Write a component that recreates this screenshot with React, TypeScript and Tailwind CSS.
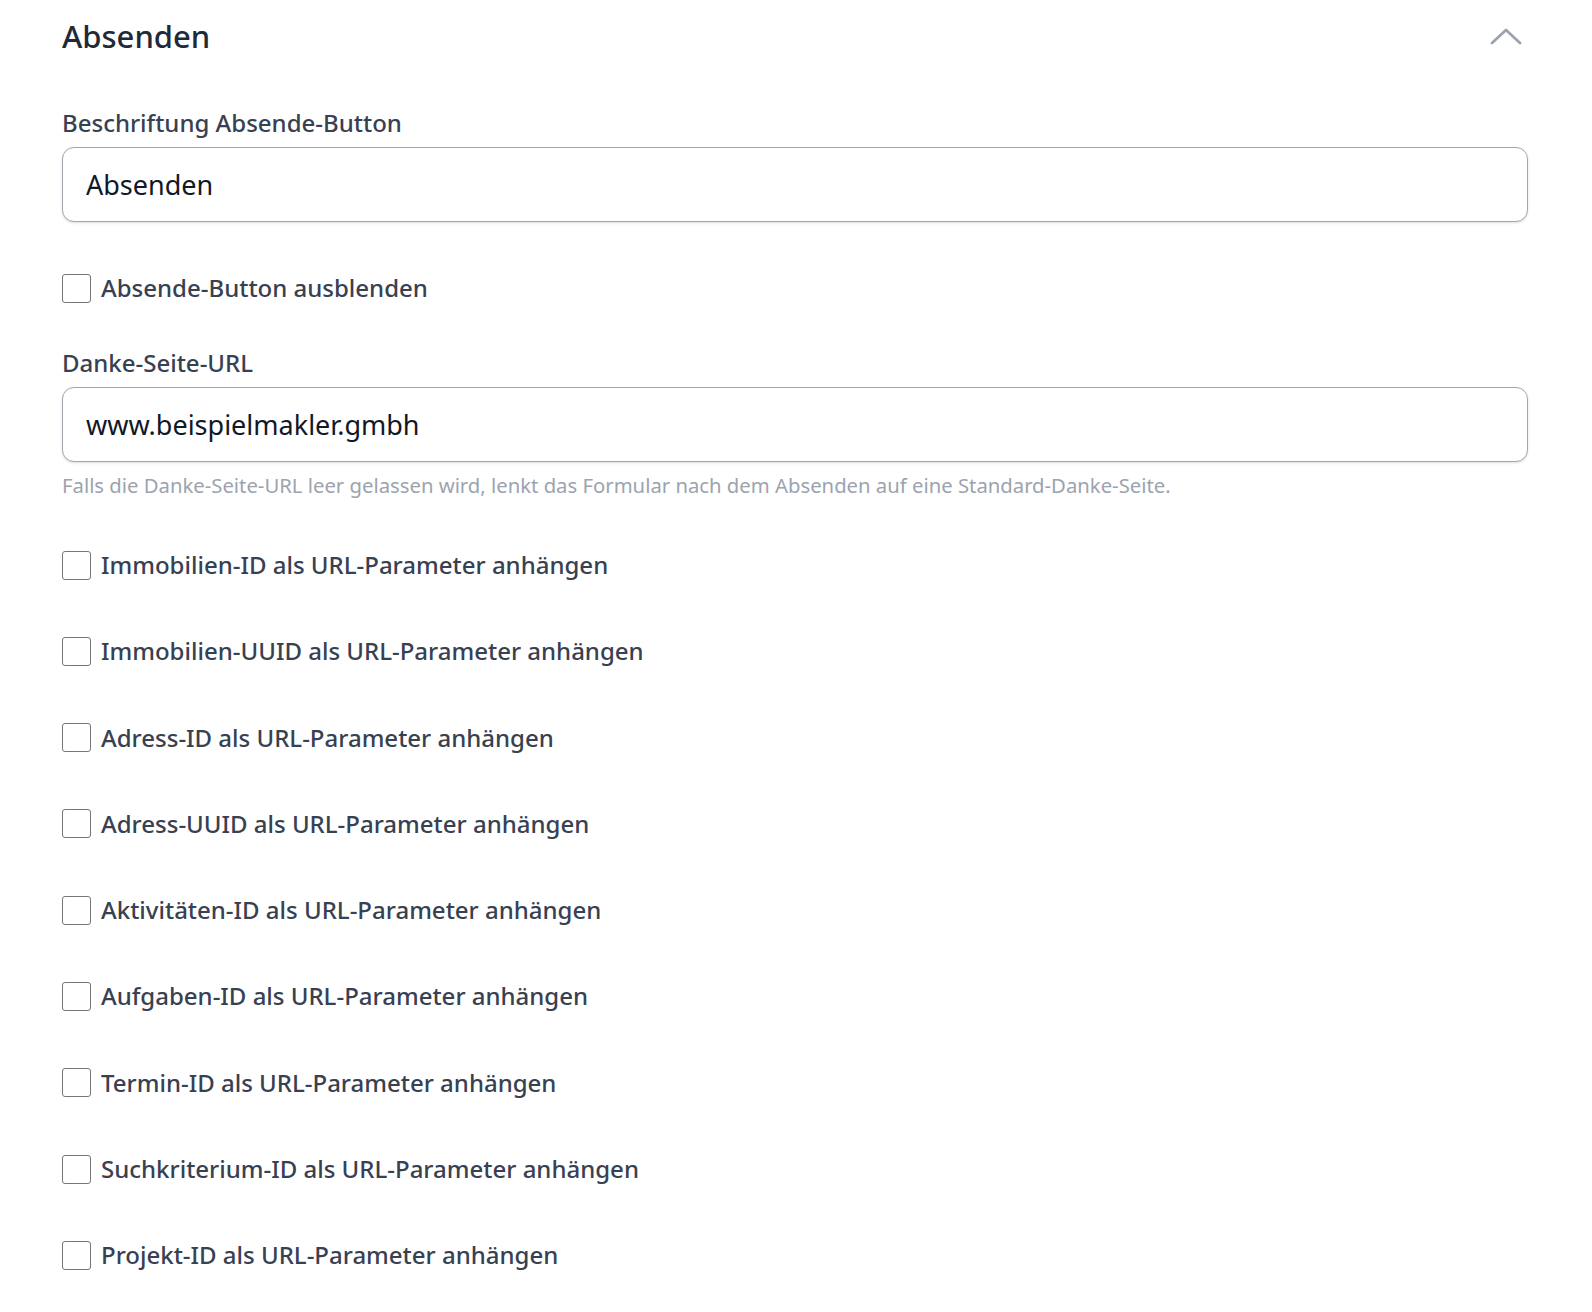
import React from "react"

const params = [
  "Immobilien-ID als URL-Parameter anhängen",
  "Immobilien-UUID als URL-Parameter anhängen",
  "Adress-ID als URL-Parameter anhängen",
  "Adress-UUID als URL-Parameter anhängen",
  "Aktivitäten-ID als URL-Parameter anhängen",
  "Aufgaben-ID als URL-Parameter anhängen",
  "Termin-ID als URL-Parameter anhängen",
  "Suchkriterium-ID als URL-Parameter anhängen",
  "Projekt-ID als URL-Parameter anhängen",
]

function Checkbox({ label }: { label: string }) {
  return (
    <label className="flex items-center h-[36px] gap-[10px] cursor-pointer">
      <input
        type="checkbox"
        className="appearance-none w-[29px] h-[29px] border-[1.5px] border-[#767676] rounded-[3px] bg-white shrink-0"
      />
      <span className="text-[24px] leading-[36px] font-medium text-[#374151]">{label}</span>
    </label>
  )
}

function Field({ label, value }: { label: string; value: string }) {
  return (
    <div className="flex flex-col gap-[6px]">
      <label className="text-[24px] leading-[36px] font-medium text-[#374151]">{label}</label>
      <input
        type="text"
        defaultValue={value}
        className="w-full h-[75px] px-[23px] text-[27px] text-[#111827] border-[1.5px] border-[#a3a6ad] rounded-[12px] shadow-sm bg-white outline-none"
      />
    </div>
  )
}

export default function App() {
  return (
    <div
      className="min-h-screen bg-white pl-[62px] pr-[64px] pt-[18px] pb-[40px]"
      style={{ fontFamily: '"Segoe UI", "Noto Sans", sans-serif' }}
    >
      <div className="flex items-center justify-between h-[36px]">
        <h2 className="text-[31px] leading-[36px] font-medium text-[#1f2937]">Absenden</h2>
        <svg width="32" height="18" viewBox="0 0 32 18" fill="none" className="mr-[6px]">
          <polyline points="2,16 16,3 30,16" stroke="#9ca3af" strokeWidth="2.8" strokeLinecap="round" strokeLinejoin="round" />
        </svg>
      </div>

      <div className="mt-[51px]">
        <Field label="Beschriftung Absende-Button" value="Absenden" />
      </div>

      <div className="mt-[48px]">
        <Checkbox label="Absende-Button ausblenden" />
      </div>

      <div className="mt-[39px]">
        <Field label="Danke-Seite-URL" value="www.beispielmakler.gmbh" />
        <p className="mt-[8px] text-[20.3px] leading-[30px] text-[#9ca3af]">
          Falls die Danke-Seite-URL leer gelassen wird, lenkt das Formular nach dem Absenden auf eine Standard-Danke-Seite.
        </p>
      </div>

      <div className="mt-[47px] flex flex-col gap-[50.3px]">
        {params.map((p) => (
          <Checkbox key={p} label={p} />
        ))}
      </div>
    </div>
  )
}
